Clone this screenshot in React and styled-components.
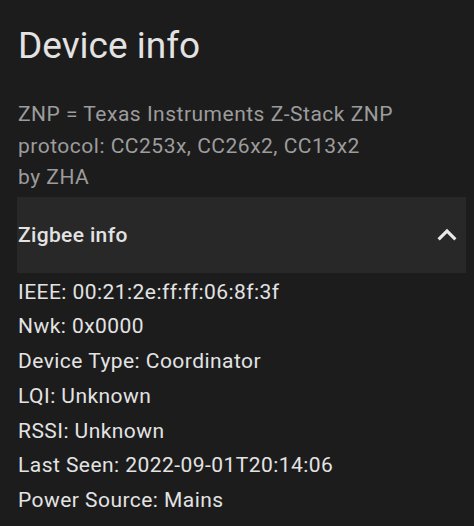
import React from "react";
import styled, { createGlobalStyle } from "styled-components";

const Global = createGlobalStyle`
  html, body { margin: 0; padding: 0; background: #1c1c1c; }
  body { font-family: Roboto, "Noto Sans", sans-serif; -webkit-font-smoothing: antialiased; }
`;

const Page = styled.div`
  box-sizing: border-box;
  width: 474px;
  height: 526px;
  overflow: hidden;
  background: #1c1c1c;
  padding: 24px 8px 0 18px;
  display: flex;
  flex-direction: column;
`;

const Title = styled.h1`
  margin: 0;
  font-size: 37px;
  line-height: 44px;
  font-weight: 400;
  color: #e3e3e3;
`;

const Description = styled.p`
  margin: 31px 0 0;
  font-size: 21px;
  line-height: 31.6px;
  letter-spacing: 0.5px;
  color: #9c9c9c;
`;

const PanelHeader = styled.div`
  margin: 3px 0 0 -1px;
  height: 76px;
  background: #282828;
  display: flex;
  align-items: center;
  justify-content: space-between;
  padding-left: 1px;
`;

const PanelTitle = styled.span`
  font-size: 21px;
  font-weight: 500;
  letter-spacing: 0.35px;
  color: #e3e3e3;
`;

const Chevron = styled.svg`
  width: 38px;
  height: 38px;
  fill: #e8e8e8;
  flex: none;
`;

const InfoList = styled.div`
  margin-top: 2px;
  display: flex;
  flex-direction: column;
`;

const InfoRow = styled.div`
  font-size: 21px;
  line-height: 34.7px;
  letter-spacing: 0.45px;
  color: #e3e3e3;
  white-space: nowrap;
`;

const rows = [
  "IEEE: 00:21:2e:ff:ff:06:8f:3f",
  "Nwk: 0x0000",
  "Device Type: Coordinator",
  "LQI: Unknown",
  "RSSI: Unknown",
  "Last Seen: 2022-09-01T20:14:06",
  "Power Source: Mains",
];

export default function App() {
  return (
    <>
      <Global />
      <Page>
        <Title>Device info</Title>
        <Description>
          ZNP = Texas Instruments Z-Stack ZNP
          <br />
          protocol: CC253x, CC26x2, CC13x2
          <br />
          by ZHA
        </Description>
        <PanelHeader>
          <PanelTitle>Zigbee info</PanelTitle>
          <Chevron viewBox="0 0 24 24">
            <path d="M12 8l-6 6 1.41 1.41L12 10.83l4.59 4.58L18 14z" />
          </Chevron>
        </PanelHeader>
        <InfoList>
          {rows.map((r) => (
            <InfoRow key={r}>{r}</InfoRow>
          ))}
        </InfoList>
      </Page>
    </>
  );
}
